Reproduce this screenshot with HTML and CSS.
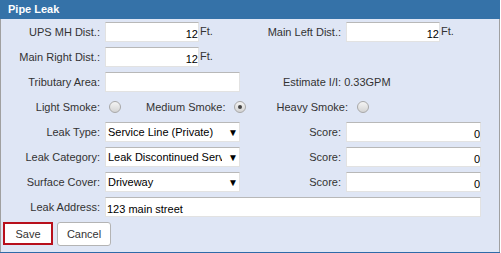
FILE: index.html
```html
<!DOCTYPE html>
<html lang="en">

<head>
  <meta charset="UTF-8" />
  <title>Pipe Leak</title>
  <link rel="stylesheet" href="styles.css">
</head>

<body>
  <div class="panel">
    <div class="panel-head">Pipe Leak</div>

    <div class="panel-body">
      <div class="form">
        <label class="lbl">UPS MH Dist.:</label>
        <div class="field"><input class="txt num dist" value="12" /><span class="unit">Ft.</span></div>
        <label class="lbl">Main Left Dist.:</label>
        <div class="field"><input class="txt num dist" value="12" /><span class="unit">Ft.</span></div>

        <label class="lbl">Main Right Dist.:</label>
        <div class="field"><input class="txt num dist" value="12" /><span class="unit">Ft.</span></div>
        <div class="span2"></div>

        <label class="lbl">Tributary Area:</label>
        <div class="field"><input class="txt" value="" /></div>
        <div class="estimate span2">Estimate I/I: 0.33GPM</div>

        <div class="smoke-row">
          <span class="smoke-lbl first">Light Smoke:</span>
          <span class="radio"></span>
          <span class="smoke-lbl medium">Medium Smoke:</span>
          <span class="radio checked"></span>
          <span class="smoke-lbl heavy">Heavy Smoke:</span>
          <span class="radio"></span>
        </div>

        <label class="lbl">Leak Type:</label>
        <div class="field">
          <div class="select"><span class="sel-text">Service Line (Private)</span><span class="arrow">▼</span></div>
        </div>
        <label class="lbl">Score:</label>
        <div class="field"><input class="txt num" value="0" /></div>

        <label class="lbl">Leak Category:</label>
        <div class="field">
          <div class="select"><span class="sel-text">Leak Discontinued Service</span><span class="arrow">▼</span></div>
        </div>
        <label class="lbl">Score:</label>
        <div class="field"><input class="txt num" value="0" /></div>

        <label class="lbl">Surface Cover:</label>
        <div class="field">
          <div class="select"><span class="sel-text">Driveway</span><span class="arrow">▼</span></div>
        </div>
        <label class="lbl">Score:</label>
        <div class="field"><input class="txt num" value="0" /></div>

        <label class="lbl">Leak Address:</label>
        <div class="field span3"><input class="txt address" value="123 main street" /></div>
      </div>

      <div class="actions">
        <button class="btn save">Save</button>
        <button class="btn">Cancel</button>
      </div>
    </div>
  </div>
</body>

</html>
```

FILE: styles.css
```css
body {
  margin: 0;
  background: #ffffff;
  font-family: 'Liberation Sans', Arial, sans-serif;
  font-size: 11px;
  color: #333;
}

.panel {
  width: 500px;
  height: 253px;
  box-sizing: border-box;
  display: flex;
  flex-direction: column;
  border-bottom: 1px solid #2f6ba8;
}

.panel-head {
  height: 19px;
  line-height: 19px;
  padding-left: 8px;
  background: #3572a8;
  color: #ffffff;
  font-weight: bold;
}

.panel-body {
  flex: 1;
  background: #dfe6f5;
  border-left: 1px solid #a0a0a0;
  border-right: 1px solid #a0a0a0;
  padding-top: 3px;
}

.form {
  display: grid;
  grid-template-columns: 104px 136px 105px 135px;
  grid-auto-rows: 20px;
  row-gap: 5px;
}

.lbl {
  text-align: right;
  padding-right: 5px;
  line-height: 20px;
  white-space: nowrap;
}

.field {
  display: flex;
  align-items: flex-start;
}

.span2 {
  grid-column: span 2;
}

.span3 {
  grid-column: span 3;
}

.txt {
  box-sizing: border-box;
  width: 135px;
  height: 20px;
  margin: 0;
  padding: 3px 1px 0;
  border: 1px solid #e2e2e2;
  border-top-color: #b8b8b8;
  background: #ffffff;
  font-family: 'Liberation Sans', Arial, sans-serif;
  font-size: 11px;
  color: #000;
  outline: none;
}

.txt.num {
  text-align: right;
  padding-right: 0;
}

.txt.dist {
  width: 94px;
}

.txt.address {
  width: 376px;
}

.unit {
  color: #333;
  font-size: 11px;
  padding-left: 1px;
  line-height: 18px;
}

.estimate {
  padding-left: 42px;
  line-height: 20px;
}

.smoke-row {
  grid-column: span 4;
  display: flex;
  align-items: center;
}

.smoke-lbl.first {
  width: 99px;
  text-align: right;
}

.smoke-lbl.medium {
  margin-left: 25px;
}

.smoke-lbl.heavy {
  margin-left: 30px;
}

.radio {
  box-sizing: border-box;
  width: 12px;
  height: 12px;
  margin-left: 9px;
  border: 1px solid #a8a8a8;
  border-radius: 50%;
  background: linear-gradient(#f4f4f4, #d4d4d4);
  display: flex;
  align-items: center;
  justify-content: center;
}

.radio.checked::after {
  content: "";
  width: 4px;
  height: 4px;
  border-radius: 50%;
  background: #444;
}

.select {
  box-sizing: border-box;
  width: 135px;
  height: 20px;
  display: flex;
  align-items: center;
  background: #ffffff;
  border: 1px solid #e2e2e2;
  border-top-color: #b8b8b8;
  color: #000;
}

.sel-text {
  width: 114px;
  padding-left: 2px;
  overflow: hidden;
  white-space: nowrap;
}

.arrow {
  font-size: 10px;
  margin-left: 6px;
}

.actions {
  display: flex;
  gap: 4px;
  padding: 5px 0 0 2px;
}

.btn {
  height: 24px;
  padding: 0;
  background: #ffffff;
  border: 1px solid #b4b4b4;
  border-radius: 3px;
  font-family: 'Liberation Sans', Arial, sans-serif;
  font-size: 11px;
  color: #333;
  width: 54px;
}

.btn.save {
  width: 50px;
  height: 23px;
  border: 2px solid #b8101c;
  border-radius: 0;
}
```
